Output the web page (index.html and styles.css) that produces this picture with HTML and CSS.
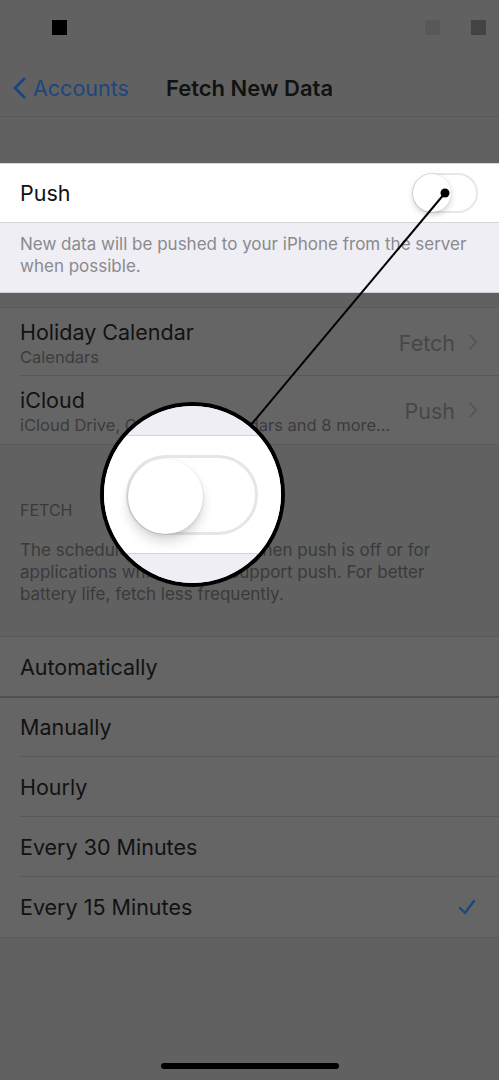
FILE: index.html
```html
<!DOCTYPE html>
<html lang="en">
<head>
<meta charset="utf-8">
<title>Fetch New Data</title>
<link rel="stylesheet" href="styles.css">
</head>
<body>
<div class="screen">
  <div class="status-bar">
    <span class="sq sq-black"></span>
    <span class="status-right">
      <span class="sq sq-mid"></span>
      <span class="sq sq-dark"></span>
    </span>
  </div>

  <nav class="nav-bar">
    <a class="back">
      <svg class="back-chevron" width="14" height="22" viewBox="0 0 14 22"><path d="M12 2 L3 11 L12 20" fill="none" stroke="currentColor" stroke-width="3" stroke-linecap="round" stroke-linejoin="round"/></svg>
      <span>Accounts</span>
    </a>
    <h1 class="nav-title">Fetch New Data</h1>
    <span></span>
  </nav>

  <section class="push-group">
    <div class="push-row">
      <span class="label">Push</span>
      <span class="switch"><span class="knob"></span></span>
    </div>
    <p class="push-footer">New data will be pushed to your iPhone from the server when possible.</p>
  </section>

  <section class="group accounts">
    <div class="row row-two">
      <div class="row-text">
        <span class="label">Holiday Calendar</span>
        <span class="sub">Calendars</span>
      </div>
      <span class="value">Fetch</span>
      <svg class="chev" width="10" height="18" viewBox="0 0 10 18"><path d="M2 2 L8 9 L2 16" fill="none" stroke="currentColor" stroke-width="1.8" stroke-linecap="round" stroke-linejoin="round"/></svg>
    </div>
    <div class="row row-two">
      <div class="row-text">
        <span class="label">iCloud</span>
        <span class="sub truncate">iCloud Drive, Contacts, Calendars and 8 more…</span>
      </div>
      <span class="value">Push</span>
      <svg class="chev" width="10" height="18" viewBox="0 0 10 18"><path d="M2 2 L8 9 L2 16" fill="none" stroke="currentColor" stroke-width="1.8" stroke-linecap="round" stroke-linejoin="round"/></svg>
    </div>
  </section>

  <h2 class="section-header">FETCH</h2>
  <p class="section-footer">The schedule below is used when push is off or for applications which do not support push. For better battery life, fetch less frequently.</p>

  <section class="group schedule">
    <div class="row row-one row-full"><span class="label">Automatically</span></div>
    <div class="row row-one"><span class="label">Manually</span></div>
    <div class="row row-one"><span class="label">Hourly</span></div>
    <div class="row row-one"><span class="label">Every 30 Minutes</span></div>
    <div class="row row-one">
      <span class="label">Every 15 Minutes</span>
      <svg class="check" width="18" height="16" viewBox="0 0 18 16"><path d="M2 9 L7 14 L16 2" fill="none" stroke="currentColor" stroke-width="2.4" stroke-linecap="round" stroke-linejoin="round"/></svg>
    </div>
  </section>

  <div class="home-indicator"></div>

  <!-- callout: pointer from the switch to the enlarged view -->
  <svg class="pointer" width="499" height="1080" viewBox="0 0 499 1080">
    <line x1="445" y1="193" x2="250" y2="426" stroke="#000" stroke-width="2"/>
    <circle cx="445" cy="193" r="4.5" fill="#000"/>
  </svg>

  <div class="lens">
    <div class="lens-band"></div>
    <div class="lens-row">
      <span class="big-switch"><span class="big-knob"></span></span>
    </div>
    <div class="lens-band lens-band-bottom"></div>
  </div>
</div>
</body>
</html>
```

FILE: styles.css
```css
* { box-sizing: border-box; }

html, body {
  margin: 0;
  padding: 0;
}

body {
  background: #616161;
  font-family: "Inter", "Liberation Sans", sans-serif;
  color: #121212;
}

.screen {
  position: relative;
  width: 499px;
  height: 1080px;
  overflow: hidden;
}

/* status bar */
.status-bar {
  height: 50px;
  display: flex;
  align-items: flex-start;
  justify-content: space-between;
  padding: 20px 13px 0 52px;
}
.status-right {
  display: flex;
  gap: 31px;
}
.sq {
  display: block;
  width: 15px;
  height: 15px;
}
.sq-black { background: #000; }
.sq-mid { background: #585858; }
.sq-dark { background: #434343; }

/* navigation bar */
.nav-bar {
  display: grid;
  grid-template-columns: 1fr auto 1fr;
  align-items: center;
  height: 67px;
  padding-top: 10px;
  border-bottom: 1px solid #585858;
}
.back {
  display: flex;
  align-items: center;
  gap: 7px;
  padding-left: 12px;
  color: #1d477c;
  font-size: 21.5px;
}
.back-chevron { display: block; }
.nav-title {
  margin: 0;
  font-size: 22px;
  font-weight: 600;
  color: #121212;
}

/* highlighted Push group */
.push-group {
  margin-top: 46px;
}
.push-row {
  height: 60px;
  background: #fff;
  border-top: 1px solid #d9d9d9;
  border-bottom: 1px solid #d6d6da;
  display: flex;
  align-items: center;
  justify-content: space-between;
  padding: 0 21px 0 20px;
  color: #000;
}
.push-row .label { font-size: 21.5px; }
.switch {
  position: relative;
  width: 66px;
  height: 40px;
  border-radius: 20px;
  border: 2px solid #e7e7ea;
  background: #fff;
}
.knob {
  position: absolute;
  left: -1px;
  top: -1px;
  width: 38px;
  height: 38px;
  border-radius: 50%;
  background: #fff;
  box-shadow: 0 3px 6px rgba(0, 0, 0, 0.18), 0 0 0 0.5px rgba(0, 0, 0, 0.06);
}
.push-footer {
  margin: 0;
  background: #efeef4;
  border-bottom: 1px solid #cfcfd3;
  padding: 10px 24px 14px 20px;
  font-size: 17px;
  line-height: 22px;
  color: #8a8a8e;
  height: 70px;
}

/* dimmed groups */
.group {
  background: #656565;
  border-top: 1px solid #595959;
  border-bottom: 1px solid #595959;
}
.accounts { margin-top: 14px; }

.row {
  display: flex;
  align-items: center;
  padding: 0 20px;
  position: relative;
}
.row + .row::before {
  content: "";
  position: absolute;
  top: -1px;
  left: 20px;
  right: 0;
  border-top: 1px solid #595959;
}
.row-two { height: 68px; }
.row-text {
  flex: 1;
  min-width: 0;
  display: flex;
  flex-direction: column;
  gap: 3px;
  padding-top: 3px;
}
.label {
  font-size: 21.5px;
  line-height: 24px;
  color: #121212;
}
.sub {
  font-size: 16.5px;
  line-height: 20px;
  color: #3c3c3c;
}
.truncate {
  white-space: nowrap;
  overflow: hidden;
  text-overflow: ellipsis;
  max-width: 384px;
}
.value {
  font-size: 21.5px;
  color: #474747;
  margin-left: 6px;
  margin-top: 2px;
}
.chev {
  color: #545454;
  margin-left: 13px;
  margin-right: 1px;
}

.section-header {
  margin: 0;
  padding: 55px 20px 0;
  font-size: 16px;
  line-height: 20px;
  font-weight: 400;
  color: #3a3a3a;
}
.section-footer {
  margin: 19px 0 0;
  padding: 0 24px 0 20px;
  font-size: 17px;
  line-height: 22px;
  color: #3a3a3a;
}

.schedule { margin-top: 31px; }
.row-one { height: 60px; justify-content: space-between; }
.row-full + .row::before {
  left: 0;
  border-top-color: #505050;
  border-top-width: 2px;
}
.check {
  color: #1d477c;
  margin-right: 3px;
}

.home-indicator {
  position: absolute;
  left: 161px;
  top: 1063px;
  width: 178px;
  height: 6px;
  border-radius: 3px;
  background: #000;
}

/* callout pointer and magnifier */
.pointer {
  position: absolute;
  left: 0;
  top: 0;
  pointer-events: none;
}
.lens {
  position: absolute;
  left: 100px;
  top: 402px;
  width: 185px;
  height: 185px;
  border-radius: 50%;
  border: 4px solid #000;
  overflow: hidden;
  background: #efeef4;
  display: flex;
  flex-direction: column;
}
.lens-band {
  height: 30px;
  flex: none;
  background: #efeef4;
  border-bottom: 1px solid #d4d4d8;
}
.lens-band-bottom {
  flex: 1;
  border-bottom: 0;
  border-top: 1px solid #d4d4d8;
}
.lens-row {
  height: 117px;
  flex: none;
  background: #fff;
  display: flex;
  align-items: center;
  padding-left: 22px;
}
.big-switch {
  position: relative;
  width: 132px;
  height: 80px;
  border-radius: 40px;
  border: 3px solid #e6e6e8;
  background: #fff;
}
.big-knob {
  position: absolute;
  left: -1px;
  top: 1px;
  width: 75px;
  height: 75px;
  border-radius: 50%;
  background: #fff;
  box-shadow: 0 8px 12px rgba(0, 0, 0, 0.14), 0 2px 4px rgba(0, 0, 0, 0.08), 0 0 0 1px rgba(0, 0, 0, 0.03);
}
```
